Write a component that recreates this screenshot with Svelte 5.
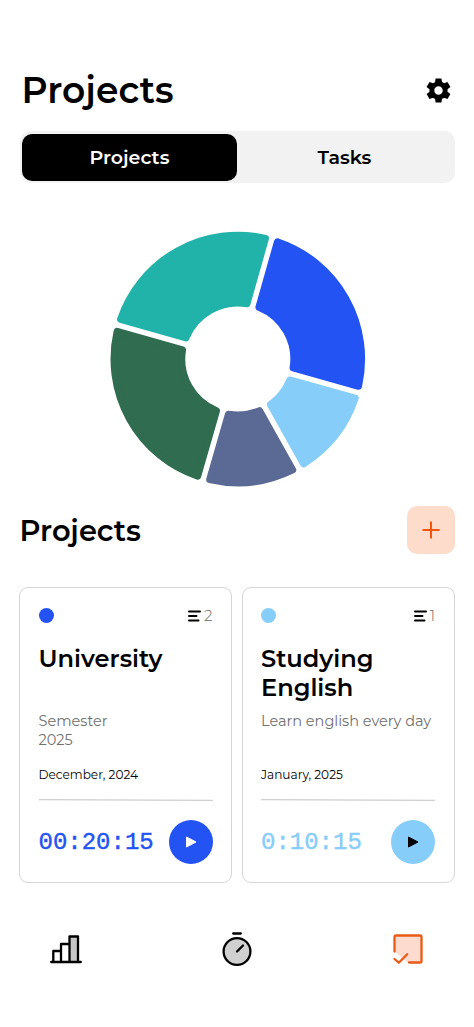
<script lang="ts">
  type Project = {
    name: string;
    description: string;
    date: string;
    time: string;
    tasks: number;
    theme: string;
  };

  const projects: Project[] = [
    { name: 'University', description: 'Semester\n2025', date: 'December, 2024', time: '00:20:15', tasks: 2, theme: 'blue' },
    { name: 'Studying English', description: 'Learn english every day', date: 'January, 2025', time: '0:10:15', tasks: 1, theme: 'sky' },
  ];

  const slices = [
    { from: 15.8, to: 105.6, color: '#2353f3' },
    { from: 105.6, to: 150.8, color: '#87cdf9' },
    { from: 150.8, to: 196, color: '#5a6a95' },
    { from: 196, to: 285.8, color: '#2f6c50' },
    { from: 285.8, to: 375.8, color: '#21b2a9' },
  ];

  let tab = $state('Projects');

  const OUTER = 127.3;
  const INNER = 52.5;
  const GAP = 5.4;
  const CORNER = 3.5;

  // the stroke of width 2 * CORNER rounds the corners, so the shape is inset by it
  function slicePath(from: number, to: number) {
    const outer = OUTER - CORNER;
    const inner = INNER + CORNER;
    const side = GAP / 2 + CORNER;
    const point = (r: number, deg: number, dir: number) => {
      const a = (deg * Math.PI) / 180 + dir * Math.asin(side / r);
      return `${(r * Math.sin(a)).toFixed(2)} ${(-r * Math.cos(a)).toFixed(2)}`;
    };
    return `M${point(outer, from, 1)} A${outer} ${outer} 0 0 1 ${point(outer, to, -1)}`
      + ` L${point(inner, to, -1)} A${inner} ${inner} 0 0 0 ${point(inner, from, 1)}Z`;
  }
</script>

<div class="screen">
  <header>
    <h1>Projects</h1>
    <button class="settings" aria-label="Settings">
      <svg viewBox="0 0 24 24" width="29" height="29">
        <path d="M19.44 12.99l-.01.02c.04-.33.08-.67.08-1.01 0-.34-.03-.66-.07-.99l.01.02 2.44-1.92-2.43-4.22-2.87 1.16.01.01c-.52-.4-1.09-.74-1.71-1h.01L14.44 2H9.57l-.44 3.07h.01c-.62.26-1.19.6-1.71 1l.01-.01-2.88-1.17-2.44 4.22 2.44 1.92.01-.02c-.04.33-.07.65-.07.99 0 .34.03.68.08 1.01l-.01-.02-2.1 1.65-.33.26 2.43 4.2 2.88-1.15-.02-.04c.53.41 1.1.75 1.73 1.01h-.03L9.58 22h4.85s.03-.18.06-.42l.38-2.65h-.01c.62-.26 1.2-.6 1.73-1.01l-.02.04 2.88 1.15 2.43-4.2s-.14-.12-.33-.26l-2.11-1.66zM12 15.5c-1.93 0-3.5-1.57-3.5-3.5s1.57-3.5 3.5-3.5 3.5 1.57 3.5 3.5-1.57 3.5-3.5 3.5z" />
      </svg>
    </button>
  </header>

  <div class="tabs">
    {#each ['Projects', 'Tasks'] as name}
      <button class:active={tab === name} onclick={() => (tab = name)}>{name}</button>
    {/each}
  </div>

  <svg class="chart" viewBox="-128 -128 256 256" width="256" height="256">
    {#each slices as s}
      <path d={slicePath(s.from, s.to)} fill={s.color} stroke={s.color} stroke-width={CORNER * 2} stroke-linejoin="round" />
    {/each}
  </svg>

  <div class="section-head">
    <h2>Projects</h2>
    <button class="add" aria-label="Add project">
      <svg viewBox="0 0 18 18" width="18" height="18"><path d="M9 .5v17M.5 9h17" /></svg>
    </button>
  </div>

  <div class="cards">
    {#each projects as p}
      <article class="card {p.theme}">
        <div class="card-top">
          <span class="dot"></span>
          <span class="count">
            <svg viewBox="0 0 13 12" width="13" height="12"><path d="M1 1.5h11M1 6h7.5M1 10.5h9.5" /></svg>
            <span>{p.tasks}</span>
          </span>
        </div>
        <h3>{p.name}</h3>
        <p class="description">{p.description}</p>
        <p class="date">{p.date}</p>
        <svg class="rule" viewBox="0 0 174 2" width="174" height="2"><path d="M0 .6 174 1.4" /></svg>
        <div class="timer">
          <span class="time">{p.time}</span>
          <button class="play" aria-label="Start timer">
            <svg viewBox="0 0 12 12" width="12" height="12"><path d="M1.5 1v10L11 6Z" /></svg>
          </button>
        </div>
      </article>
    {/each}
  </div>

  <nav>
    <button aria-label="Statistics">
      <svg viewBox="0 0 32 32" width="32" height="32">
        <path d="M19.5 3H28v25h-8.5Z" fill="#c6c6c6" />
        <path d="M1.2 29h29.6M3.3 29V18H11M11 29V11h8.5M19.5 29V3.5H28V29" />
      </svg>
    </button>
    <button aria-label="Timer">
      <svg viewBox="0 0 32 36" width="32" height="36">
        <circle cx="16" cy="20.5" r="13.4" fill="#d0d0d0" />
        <path d="M12.2 2.5h7.6M16 20.5l6-6" />
      </svg>
    </button>
    <button class="current" aria-label="Projects">
      <svg viewBox="0 0 32 32" width="32" height="32">
        <path class="fill" d="M3 3h26v26H15L3 19Z" />
        <path d="M2.5 18.500V4Q2.500 2.500 4 2.500H28Q29.500 2.500 29.500 4V28Q29.500 29.500 28 29.500H17M2.500 26l4.300 3.700 8.400-8.500" />
      </svg>
    </button>
  </nav>
</div>

<style>
  :global(body) {
    background: #fff;
  }

  .screen {
    box-sizing: border-box;
    width: 474px;
    height: 1027px;
    padding: 62px 19.5px 0;
    background: #fff;
    color: #000;
    font-family: Montserrat, Inter, sans-serif;
    overflow: hidden;
  }

  h1, h2, h3, p {
    margin: 0;
    font-weight: 600;
  }

  button {
    display: grid;
    place-items: center;
    padding: 0;
    border: none;
    background: none;
    color: inherit;
    font-family: inherit;
    cursor: pointer;
  }

  header {
    display: flex;
    align-items: center;
    justify-content: space-between;
    height: 56px;
    padding: 0 2px;
  }

  h1 {
    font-size: 36px;
    letter-spacing: 0.1px;
  }

  .tabs {
    display: grid;
    grid-template-columns: 215px 1fr;
    box-sizing: border-box;
    height: 52px;
    margin-top: 13px;
    padding: 2.5px;
    border-radius: 10px;
    background: #f2f2f2;
  }

  .tabs button {
    border-radius: 10px;
    font-size: 19px;
    font-weight: 600;
  }

  .tabs .active {
    background: #000;
    color: #fff;
  }

  .chart {
    display: block;
    margin: 48px auto 0;
    transform: translateX(0.8px);
  }

  .section-head {
    display: flex;
    align-items: center;
    justify-content: space-between;
    height: 48px;
    margin-top: 19px;
  }

  h2 {
    font-size: 28.9px;
  }

  .add {
    width: 48px;
    height: 48px;
    border-radius: 10px;
    background: #fddccb;
  }

  .add path {
    stroke: #f4560f;
    stroke-width: 2;
  }

  .cards {
    display: grid;
    grid-template-columns: 1fr 1fr;
    gap: 9.5px;
    margin: 33px 0 0 -0.5px;
  }

  .card {
    box-sizing: border-box;
    height: 296px;
    padding: 18.5px;
    border: 1px solid #d6d6d6;
    border-radius: 9px;
  }

  .blue {
    --accent: #2353f3;
    --glyph: #fff;
  }

  .sky {
    --accent: #87cdf9;
    --glyph: #000;
  }

  .card-top {
    display: flex;
    align-items: center;
    justify-content: space-between;
    height: 18px;
  }

  .dot {
    width: 15px;
    height: 15px;
    border-radius: 50%;
    background: var(--accent);
  }

  .count {
    display: flex;
    align-items: center;
    gap: 3px;
    color: #666;
    font-size: 15px;
    font-weight: 300;
  }

  .count path {
    stroke: #000;
    stroke-width: 2;
    stroke-linecap: round;
  }

  h3 {
    height: 58px;
    margin-top: 19.5px;
    font-size: 24.1px;
    line-height: 29px;
  }

  .description {
    height: 37px;
    margin-top: 10px;
    color: #707070;
    font-size: 14.5px;
    font-weight: 400;
    line-height: 18.5px;
    white-space: pre-line;
  }

  .date {
    margin-top: 18px;
    font-size: 12.1px;
    font-weight: 400;
    line-height: 16px;
  }

  .rule {
    display: block;
    margin-top: 16px;
  }

  .rule path {
    stroke: #d0d0d0;
    stroke-width: 1.3;
  }

  .timer {
    display: flex;
    align-items: center;
    justify-content: space-between;
    margin-top: 19px;
  }

  .time {
    color: var(--accent);
    font-family: Cousine, "Liberation Mono", monospace;
    font-size: 24px;
    -webkit-text-stroke: 0.4px var(--accent);
  }

  .play {
    width: 44px;
    height: 44px;
    border-radius: 50%;
    background: var(--accent);
  }

  .play path {
    fill: var(--glyph);
    stroke: var(--glyph);
    stroke-linejoin: round;
  }

  nav {
    display: flex;
    align-items: center;
    justify-content: space-between;
    height: 36px;
    margin-top: 48px;
    padding: 0 30.5px 0 30px;
  }

  nav svg {
    fill: none;
    stroke: #000;
    stroke-width: 2.3;
    stroke-linecap: round;
    stroke-linejoin: round;
  }

  nav path[fill] {
    stroke: none;
  }

  .current svg {
    stroke: #e95a16;
  }

  .current .fill {
    fill: #fddccf;
    stroke: none;
  }
</style>
